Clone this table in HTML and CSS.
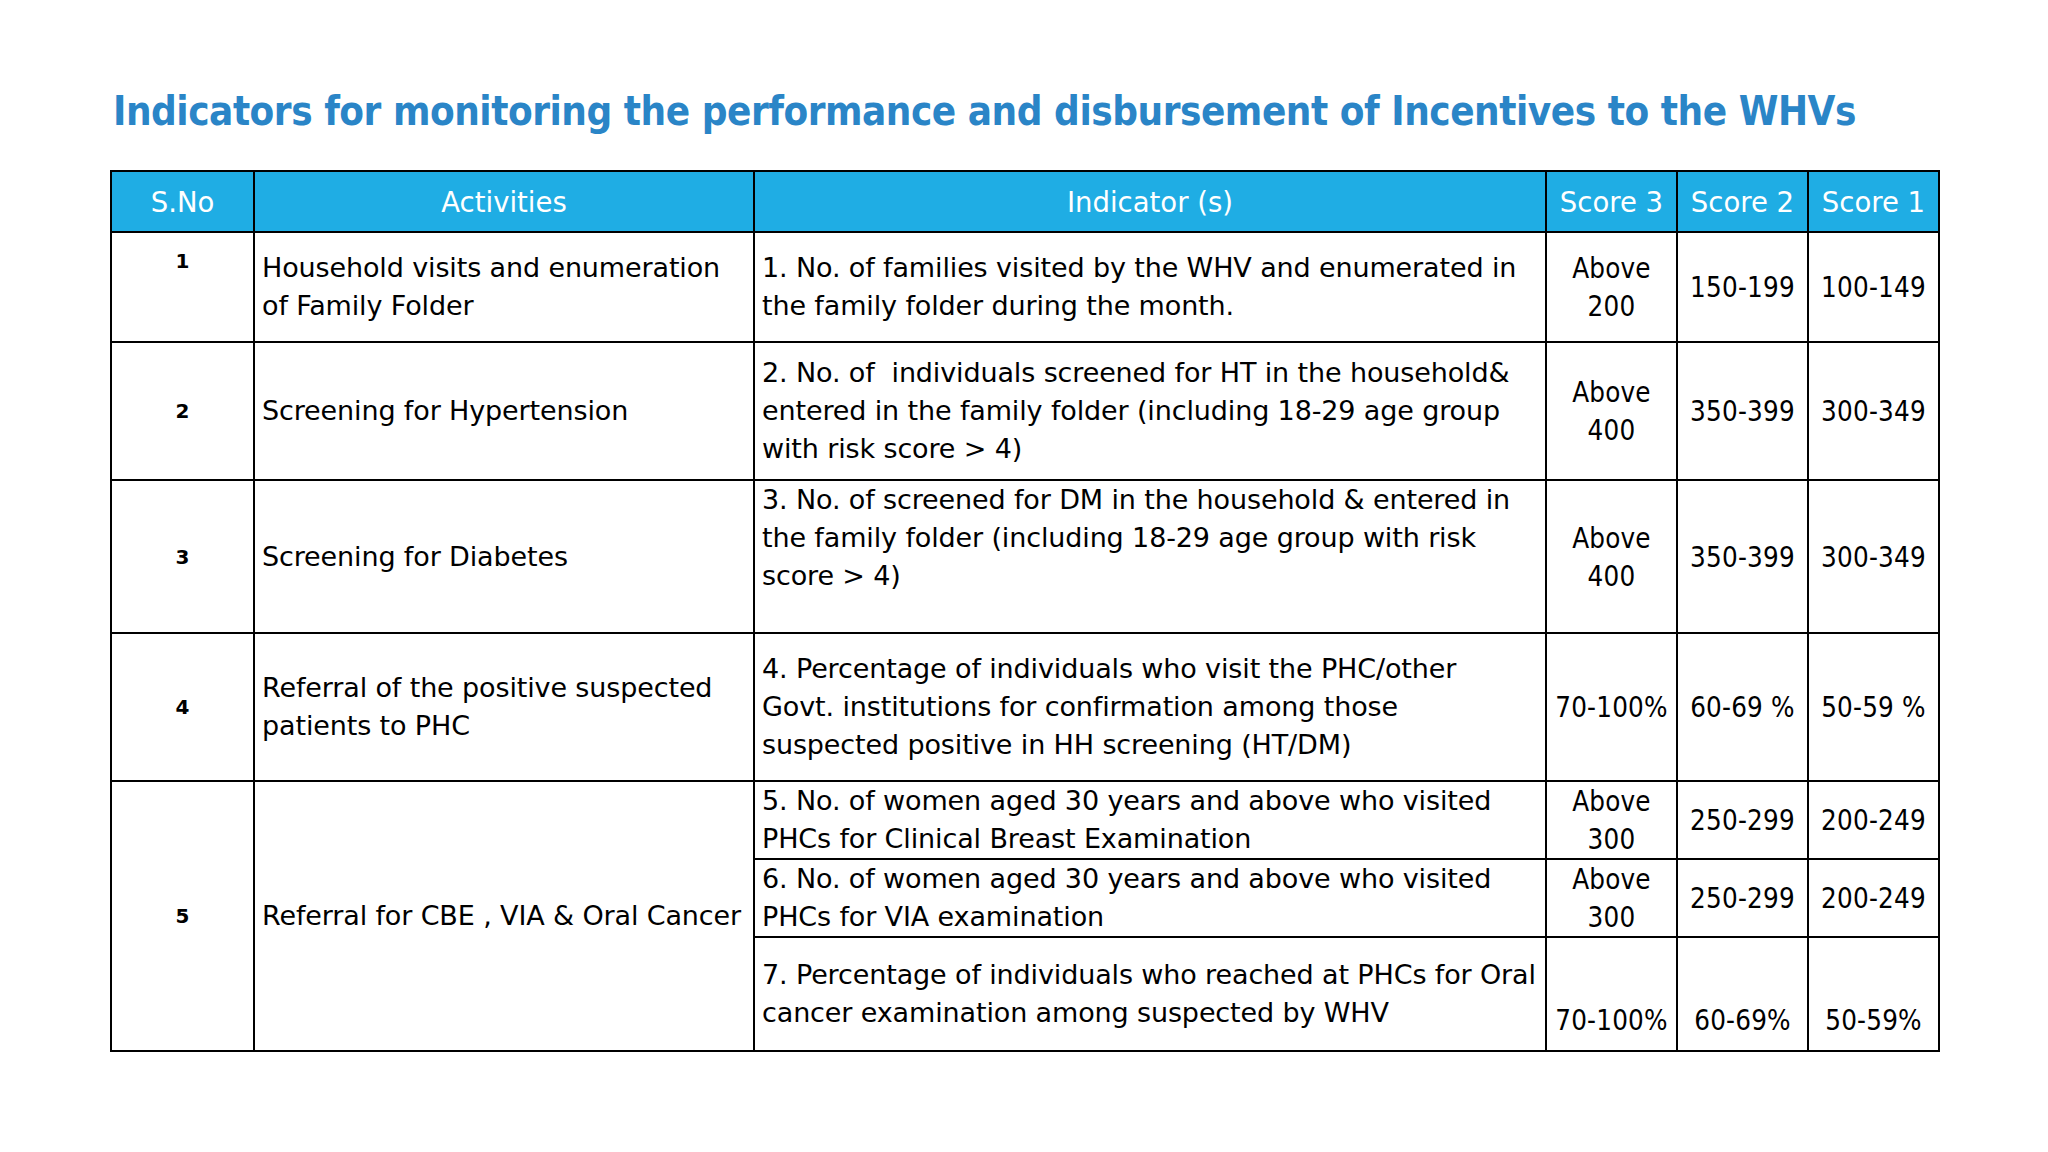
FILE: index.html
```html
<!DOCTYPE html>
<html lang="en">
<head>
<meta charset="utf-8">
<title>Indicators for monitoring the performance and disbursement of Incentives to the WHVs</title>
<link rel="stylesheet" href="styles.css">
</head>
<body>
<main class="slide">
  <h1 class="title">Indicators for monitoring the performance and disbursement of Incentives to the WHVs</h1>
  <table class="grid">
    <colgroup>
      <col class="c-sno">
      <col class="c-act">
      <col class="c-ind">
      <col class="c-score">
      <col class="c-score">
      <col class="c-score">
    </colgroup>
    <thead>
      <tr class="r-head">
        <th>S.No</th>
        <th>Activities</th>
        <th>Indicator (s)</th>
        <th>Score 3</th>
        <th>Score 2</th>
        <th>Score 1</th>
      </tr>
    </thead>
    <tbody>
      <tr class="r1">
        <td class="sno top">1</td>
        <td class="act">Household visits and enumeration<br>of Family Folder</td>
        <td class="ind">1. No. of families visited by the WHV and enumerated in<br>the family folder during the month.</td>
        <td class="score">Above<br>200</td>
        <td class="score">150-199</td>
        <td class="score">100-149</td>
      </tr>
      <tr class="r2">
        <td class="sno">2</td>
        <td class="act">Screening for Hypertension</td>
        <td class="ind">2. No. of &nbsp;individuals screened for HT in the household&amp;<br>entered in the family folder (including 18-29 age group<br>with risk score &gt; 4)</td>
        <td class="score">Above<br>400</td>
        <td class="score">350-399</td>
        <td class="score">300-349</td>
      </tr>
      <tr class="r3">
        <td class="sno">3</td>
        <td class="act">Screening for Diabetes</td>
        <td class="ind top">3. No. of screened for DM in the household &amp; entered in<br>the family folder (including 18-29 age group with risk<br>score &gt; 4)</td>
        <td class="score">Above<br>400</td>
        <td class="score">350-399</td>
        <td class="score">300-349</td>
      </tr>
      <tr class="r4">
        <td class="sno">4</td>
        <td class="act">Referral of the positive suspected<br>patients to PHC</td>
        <td class="ind">4. Percentage of individuals who visit the PHC/other<br>Govt. institutions for confirmation among those<br>suspected positive in HH screening (HT/DM)</td>
        <td class="score">70-100%</td>
        <td class="score">60-69 %</td>
        <td class="score">50-59 %</td>
      </tr>
      <tr class="r5a">
        <td class="sno" rowspan="3">5</td>
        <td class="act" rowspan="3">Referral for CBE , VIA &amp; Oral Cancer</td>
        <td class="ind">5. No. of women aged 30 years and above who visited<br>PHCs for Clinical Breast Examination</td>
        <td class="score">Above<br>300</td>
        <td class="score">250-299</td>
        <td class="score">200-249</td>
      </tr>
      <tr class="r5b">
        <td class="ind">6. No. of women aged 30 years and above who visited<br>PHCs for VIA examination</td>
        <td class="score">Above<br>300</td>
        <td class="score">250-299</td>
        <td class="score">200-249</td>
      </tr>
      <tr class="r5c">
        <td class="ind">7. Percentage of individuals who reached at PHCs for Oral<br>cancer examination among suspected by WHV</td>
        <td class="score bottom">70-100%</td>
        <td class="score bottom">60-69%</td>
        <td class="score bottom">50-59%</td>
      </tr>
    </tbody>
  </table>
</main>
</body>
</html>
```

FILE: styles.css
```css
html, body {
  margin: 0;
  padding: 0;
  background: #ffffff;
}

body {
  width: 2048px;
  height: 1152px;
  overflow: hidden;
  font-family: "DejaVu Sans", "Liberation Sans", sans-serif;
  color: #000000;
}

.slide {
  padding: 86px 0 0 110px;
}

.title {
  margin: 0 0 34px 3px;
  font-family: "DejaVu Sans Condensed", "DejaVu Sans", sans-serif;
  font-stretch: condensed;
  font-size: 40px;
  line-height: 50px;
  letter-spacing: -0.47px;
  font-weight: bold;
  color: #2a85c7;
  white-space: nowrap;
}

.grid {
  border-collapse: collapse;
  table-layout: fixed;
  width: 1828px;
}

.c-sno { width: 143px; }
.c-act { width: 500px; }
.c-ind { width: 792px; }
.c-score { width: 131px; }

.grid th,
.grid td {
  border: 2px solid #000000;
  padding: 0 8px;
  font-size: 27px;
  line-height: 38px;
  letter-spacing: -0.13px;
  white-space: nowrap;
  overflow: hidden;
  vertical-align: middle;
}

.grid th {
  background: #1fade4;
  color: #ffffff;
  font-weight: normal;
  font-size: 27.5px;
  letter-spacing: 0;
  text-align: center;
  padding: 0 2px;
}

.r-head { height: 61px; }
.r1 { height: 110px; }
.r2 { height: 138px; }
.r3 { height: 153px; }
.r4 { height: 148px; }
.r5a { height: 76px; }
.r5b { height: 77px; }
.r5c { height: 114px; }

.grid td.sno {
  text-align: center;
  font-size: 20px;
  font-weight: bold;
  letter-spacing: 0;
}

.grid td.top {
  vertical-align: top;
}

.grid td.sno.top {
  padding-top: 9px;
}

.grid td.act {
  text-align: left;
  padding-left: 7px;
}

.grid td.ind {
  text-align: left;
  padding-left: 7px;
}

.grid td.score {
  text-align: center;
  padding: 0 1px;
  font-family: "DejaVu Sans Condensed", "DejaVu Sans", sans-serif;
  font-stretch: condensed;
  font-size: 27.5px;
  letter-spacing: 0.2px;
}

.grid td.bottom {
  vertical-align: bottom;
  padding-bottom: 11px;
}
```
